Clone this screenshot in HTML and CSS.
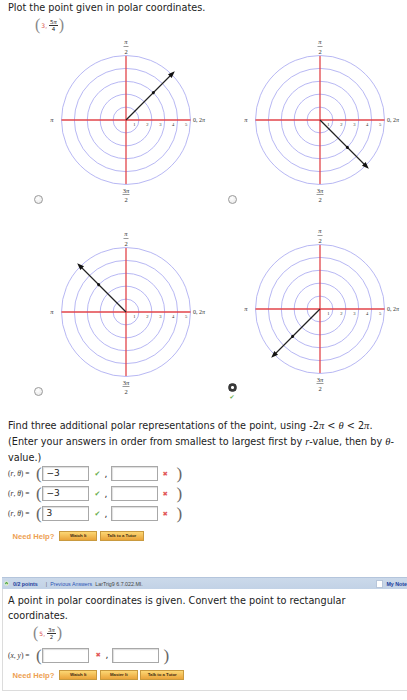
FILE: index.html
```html
<!DOCTYPE html>
<html>
<head>
<meta charset="utf-8">
<link rel="stylesheet" href="styles.css">
</head>
<body>
<div class="q1">
  <p class="prompt">Plot the point given in polar coordinates.</p>
  <div class="given g1">
    <span class="paren">(</span><span class="red">3,</span>
    <span class="frac"><span class="num">5<i>π</i></span><span class="den">4</span></span>
    <span class="paren">)</span>
  </div>

  <div class="plots">
    <div class="cell">
      <div class="rcol"><span class="radio"></span></div>
      <svg class="polar" width="168" height="168" viewBox="0 0 168 168">
        <g class="rings"><circle cx="82" cy="84" r="12.9"/><circle cx="82" cy="84" r="25.8"/><circle cx="82" cy="84" r="38.7"/><circle cx="82" cy="84" r="51.6"/><circle cx="82" cy="84" r="64.5"/></g>
        <g class="axes"><line x1="17.5" y1="84" x2="146.5" y2="84"/><line x1="82" y1="20" x2="82" y2="148"/></g>
        <g class="ticks"><text x="90.5" y="89.5">1</text><text x="103.4" y="89.5">2</text><text x="116.3" y="89.5">3</text><text x="129.2" y="89.5">4</text><text x="142.1" y="89.5">5</text></g>
        <g class="lab"><text class="it" x="82" y="8">π</text><line x1="79.5" y1="10.5" x2="84.5" y2="10.5"/><text x="82" y="17.5">2</text><text x="82" y="156.5">3<tspan class="it">π</tspan></text><line x1="78.5" y1="158.5" x2="85.5" y2="158.5"/><text x="82" y="165.5">2</text><text class="it" x="8" y="86">π</text><text class="st" x="149" y="86">0, 2<tspan class="it">π</tspan></text></g>
        <g class="arrow" transform="rotate(-45 82 84)"><line x1="82" y1="84" x2="147" y2="84"/><polygon points="151,84 144,81.4 144,86.6"/><circle cx="120.7" cy="84" r="1.5"/></g>
      </svg>
    </div>
    <div class="cell">
      <div class="rcol"><span class="radio"></span></div>
      <svg class="polar" width="168" height="168" viewBox="0 0 168 168">
        <g class="rings"><circle cx="82" cy="84" r="12.9"/><circle cx="82" cy="84" r="25.8"/><circle cx="82" cy="84" r="38.7"/><circle cx="82" cy="84" r="51.6"/><circle cx="82" cy="84" r="64.5"/></g>
        <g class="axes"><line x1="17.5" y1="84" x2="146.5" y2="84"/><line x1="82" y1="20" x2="82" y2="148"/></g>
        <g class="ticks"><text x="90.5" y="89.5">1</text><text x="103.4" y="89.5">2</text><text x="116.3" y="89.5">3</text><text x="129.2" y="89.5">4</text><text x="142.1" y="89.5">5</text></g>
        <g class="lab"><text class="it" x="82" y="8">π</text><line x1="79.5" y1="10.5" x2="84.5" y2="10.5"/><text x="82" y="17.5">2</text><text x="82" y="156.5">3<tspan class="it">π</tspan></text><line x1="78.5" y1="158.5" x2="85.5" y2="158.5"/><text x="82" y="165.5">2</text><text class="it" x="8" y="86">π</text><text class="st" x="149" y="86">0, 2<tspan class="it">π</tspan></text></g>
        <g class="arrow" transform="rotate(45 82 84)"><line x1="82" y1="84" x2="147" y2="84"/><polygon points="151,84 144,81.4 144,86.6"/><circle cx="120.7" cy="84" r="1.5"/></g>
      </svg>
    </div>
    <div class="cell">
      <div class="rcol"><span class="radio"></span></div>
      <svg class="polar" width="168" height="168" viewBox="0 0 168 168">
        <g class="rings"><circle cx="82" cy="84" r="12.9"/><circle cx="82" cy="84" r="25.8"/><circle cx="82" cy="84" r="38.7"/><circle cx="82" cy="84" r="51.6"/><circle cx="82" cy="84" r="64.5"/></g>
        <g class="axes"><line x1="17.5" y1="84" x2="146.5" y2="84"/><line x1="82" y1="20" x2="82" y2="148"/></g>
        <g class="ticks"><text x="90.5" y="89.5">1</text><text x="103.4" y="89.5">2</text><text x="116.3" y="89.5">3</text><text x="129.2" y="89.5">4</text><text x="142.1" y="89.5">5</text></g>
        <g class="lab"><text class="it" x="82" y="8">π</text><line x1="79.5" y1="10.5" x2="84.5" y2="10.5"/><text x="82" y="17.5">2</text><text x="82" y="156.5">3<tspan class="it">π</tspan></text><line x1="78.5" y1="158.5" x2="85.5" y2="158.5"/><text x="82" y="165.5">2</text><text class="it" x="8" y="86">π</text><text class="st" x="149" y="86">0, 2<tspan class="it">π</tspan></text></g>
        <g class="arrow" transform="rotate(-135 82 84)"><line x1="82" y1="84" x2="147" y2="84"/><polygon points="151,84 144,81.4 144,86.6"/><circle cx="120.7" cy="84" r="1.5"/></g>
      </svg>
    </div>
    <div class="cell">
      <div class="rcol"><span class="radio on"></span><span class="ok small">✔</span></div>
      <svg class="polar" width="168" height="168" viewBox="0 0 168 168">
        <g transform="translate(0 -3)">
        <g class="rings"><circle cx="82" cy="84" r="12.9"/><circle cx="82" cy="84" r="25.8"/><circle cx="82" cy="84" r="38.7"/><circle cx="82" cy="84" r="51.6"/><circle cx="82" cy="84" r="64.5"/></g>
        <g class="axes"><line x1="17.5" y1="84" x2="146.5" y2="84"/><line x1="82" y1="20" x2="82" y2="148"/></g>
        <g class="ticks"><text x="90.5" y="89.5">1</text><text x="103.4" y="89.5">2</text><text x="116.3" y="89.5">3</text><text x="129.2" y="89.5">4</text><text x="142.1" y="89.5">5</text></g>
        <g class="lab"><text class="it" x="82" y="8">π</text><line x1="79.5" y1="10.5" x2="84.5" y2="10.5"/><text x="82" y="17.5">2</text><text x="82" y="156.5">3<tspan class="it">π</tspan></text><line x1="78.5" y1="158.5" x2="85.5" y2="158.5"/><text x="82" y="165.5">2</text><text class="it" x="8" y="86">π</text><text class="st" x="149" y="86">0, 2<tspan class="it">π</tspan></text></g>
        <g class="arrow" transform="rotate(135 82 84)"><line x1="82" y1="84" x2="147" y2="84"/><polygon points="151,84 144,81.4 144,86.6"/><circle cx="120.7" cy="84" r="1.5"/></g>
        </g>
      </svg>
    </div>
  </div>

  <p class="find">Find three additional polar representations of the point, using -2<i class="m">π</i> &lt; <i class="m">θ</i> &lt; 2<i class="m">π</i>.<br>(Enter your answers in order from smallest to largest first by <i class="m">r</i>-value, then by <i class="m">θ</i>-<br>value.)</p>

  <div class="answers">
    <div class="ans-row">
      <span class="lbl">(<i>r</i>, <i>θ</i>) =</span><span class="bparen">(</span>
      <span class="box">−3</span><span class="ok">✔</span><span class="comma">,</span>
      <span class="box"></span><span class="bad">✖</span><span class="bparen close">)</span>
    </div>
    <div class="ans-row">
      <span class="lbl">(<i>r</i>, <i>θ</i>) =</span><span class="bparen">(</span>
      <span class="box">−3</span><span class="ok">✔</span><span class="comma">,</span>
      <span class="box"></span><span class="bad">✖</span><span class="bparen close">)</span>
    </div>
    <div class="ans-row">
      <span class="lbl">(<i>r</i>, <i>θ</i>) =</span><span class="bparen">(</span>
      <span class="box">3</span><span class="ok">✔</span><span class="comma">,</span>
      <span class="box"></span><span class="bad">✖</span><span class="bparen close">)</span>
    </div>
  </div>

  <div class="help h1">
    <span class="need">Need Help?</span>
    <span class="btn w38">Watch It</span>
    <span class="btn w44">Talk to a Tutor</span>
  </div>
</div>

<div class="q2">
  <div class="bar">
    <div class="bar-left">
      <span class="dot">+</span>
      <span class="pts">0/2 points</span>
      <span class="sep">|</span>
      <span class="prev">Previous Answers</span>
      <span class="code">LarTrig9 6.7.022.MI.</span>
    </div>
    <div class="bar-right"><span class="note"></span><span class="mynote">My Note</span></div>
  </div>
  <div class="card">
    <p class="prompt2">A point in polar coordinates is given. Convert the point to rectangular<br>coordinates.</p>
    <div class="given g2">
      <span class="paren">(</span><span class="red">5,</span>
      <span class="frac"><span class="num">3<i>π</i></span><span class="den">2</span></span>
      <span class="paren">)</span>
    </div>
    <div class="ans-row r2">
      <span class="lbl">(<i>x</i>, <i>y</i>) =</span><span class="bparen">(</span>
      <span class="box"></span><span class="bad b1">✖</span><span class="comma">,</span>
      <span class="box"></span><span class="bparen close2">)</span>
    </div>
    <div class="help h2">
      <span class="need">Need Help?</span>
      <span class="btn w38">Watch It</span>
      <span class="btn w38">Master It</span>
      <span class="btn w44">Talk to a Tutor</span>
    </div>
  </div>
</div>
</body>
</html>
```
FILE: styles.css
```css
body {
  margin: 0;
  width: 407px;
  background: #fff;
  color: #222;
  font-family: "DejaVu Sans", Verdana, sans-serif;
  font-size: 9.7px;
  overflow: hidden;
}
p { margin: 0; }
i.m { font-family: "Liberation Serif", serif; font-size: 10.5px; line-height: 10px; }

.q1 { padding: 1px 0 0 8px; }
.prompt { line-height: 14px; }

.given {
  display: flex;
  align-items: center;
  height: 16px;
  margin-top: 2px;
  margin-left: 27px;
  font-family: "DejaVu Sans", sans-serif;
}
.paren {
  font-family: "Liberation Serif", serif;
  font-size: 16px;
  line-height: 16px;
  color: #888;
}
.red { color: #d9534f; font-size: 6px; margin: 0 1px 0 1px; }
.frac {
  display: inline-flex;
  flex-direction: column;
  align-items: center;
  font-size: 5.5px;
  line-height: 6px;
  margin: 0 1px;
}
.frac i { font-family: "Liberation Serif", serif; font-size: 6.5px; }
.frac .num { padding: 0 1px; border-bottom: 0.8px solid #333; }

.plots {
  display: grid;
  grid-template-columns: 194px 179px;
  row-gap: 24px;
  margin: 3px 0 0 26px;
}
.cell { display: flex; align-items: flex-end; gap: 1px; }
.rcol { display: flex; flex-direction: column; align-items: center; width: 9px; }
.radio {
  display: block;
  width: 7px;
  height: 7px;
  border-radius: 50%;
  border: 1px solid #9a9a9a;
  background: radial-gradient(circle at 40% 35%, #fff, #e4e4e4);
}
.radio.on {
  border-color: #333;
  background: radial-gradient(circle, #fff 0 1.3px, #3a3a3a 1.6px);
}
.ok.small { font-size: 6px; line-height: 7px; margin: 1px 0 -4px; }

.polar { display: block; }
.rings { fill: none; stroke: #a4a4f0; stroke-width: 0.8; }
.axes { stroke: #e2444a; stroke-width: 1.3; }
.ticks text { font-family: "Liberation Serif", serif; font-size: 4.6px; fill: #333; text-anchor: middle; }
.lab text { font-family: "Liberation Serif", serif; font-size: 6.5px; fill: #333; text-anchor: middle; }
.lab text.st { text-anchor: start; font-size: 6px; }
.lab .it { font-style: italic; }
.lab line { stroke: #333; stroke-width: 0.5; }
.arrow line { stroke: #222; stroke-width: 1.2; }
.arrow polygon, .arrow circle { fill: #111; }

.find { margin-top: 22px; line-height: 16px; white-space: nowrap; }

.answers { display: flex; flex-direction: column; gap: 5px; margin-top: 0; }
.ans-row { display: flex; align-items: center; height: 15px; }
.lbl {
  width: 28px;
  font-family: "Liberation Serif", serif;
  font-size: 7.5px;
  color: #333;
  white-space: nowrap;
}
.bparen {
  width: 5.5px;
  font-family: "Liberation Serif", serif;
  font-size: 17px;
  line-height: 15px;
  color: #666;
}
.box {
  box-sizing: border-box;
  width: 47px;
  height: 15px;
  border: 1px solid #a8a8a8;
  box-shadow: inset 1px 1px 1px #ddd;
  background: #fff;
  font-size: 9px;
  line-height: 13px;
  padding-left: 4px;
  color: #222;
}
.ok { color: #67ad4c; font-size: 7px; width: 6px; margin-left: 6px; }
.comma { width: 3px; margin-left: 4px; margin-right: 3px; font-size: 9px; }
.bad { color: #e25a5a; font-size: 6.5px; width: 6px; margin-left: 5px; }
.close { margin-left: 8px; }

.help { display: flex; align-items: center; height: 10px; }
.h1 { margin-top: 10px; }
.need {
  font-family: "Liberation Sans", Arial, sans-serif;
  font-weight: bold;
  font-size: 7.6px;
  color: #eda052;
  margin-left: 4.5px;
  margin-right: 5px;
}
.btn {
  box-sizing: border-box;
  height: 10px;
  margin-right: 2.5px;
  border: 1px solid #c99a3f;
  background: linear-gradient(#fcd774, #eaa43a);
  font-family: "Liberation Sans", Arial, sans-serif;
  font-weight: bold;
  font-size: 4.3px;
  line-height: 8px;
  text-align: center;
  color: #3a2a10;
}
.w38 { width: 38px; }
.w44 { width: 44px; }

.q2 { margin-top: 36px; margin-left: 2px; }
.bar {
  display: flex;
  justify-content: space-between;
  align-items: center;
  height: 12px;
  background: linear-gradient(#cbd9ea, #c2d2e6);
  border-top: 1px solid #b4c5dc;
  box-sizing: border-box;
  font-family: "Liberation Sans", Arial, sans-serif;
  font-size: 5.3px;
}
.bar-left { display: flex; align-items: center; }
.dot {
  box-sizing: border-box;
  width: 5px;
  height: 5px;
  margin-left: 2px;
  margin-right: 4px;
  border-radius: 50%;
  background: #56a84a;
  border: 0.6px solid #e8f0e0;
  color: #fff;
  font-size: 4px;
  line-height: 3.6px;
  text-align: center;
  font-weight: bold;
}
.pts { font-weight: bold; color: #1b3c9a; }
.sep { color: #667; margin: 0 3px 0 8px; }
.prev { color: #2a54b4; margin-right: 3px; }
.code { color: #444; }
.bar-right { display: flex; align-items: center; gap: 3px; margin-right: 0; }
.note { width: 5px; height: 6px; background: #fff; border: 0.5px solid #b8c6da; }
.mynote { font-weight: bold; color: #1b3c9a; }

.card {
  border-left: 1px solid #dcdcdc;
  border-bottom: 1px solid #dcdcdc;
  padding: 4px 0 9.5px 5px;
}
.prompt2 { line-height: 15px; white-space: nowrap; }
.g2 { margin-left: 25px; margin-top: 2px; }
.r2 { margin-top: 6.5px; }
.b1 { margin-left: 7px; }
.close2 { margin-left: 5px; }
.h2 { margin-top: 7.5px; }
```
